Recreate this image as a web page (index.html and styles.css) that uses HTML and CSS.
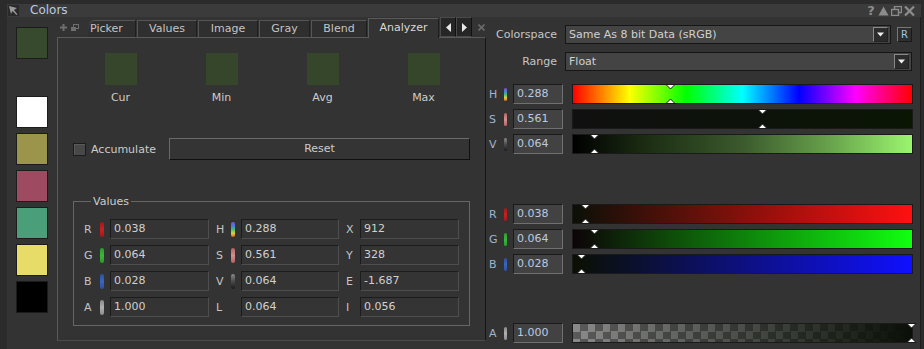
FILE: index.html
```html
<!DOCTYPE html>
<html>
<head>
<meta charset="utf-8">
<link rel="stylesheet" href="styles.css">
</head>
<body>
<div class="window">
  <div class="titlebar">
    <svg class="ticon" width="11" height="11" viewBox="0 0 11 11"><rect x="0" y="0" width="11" height="11" fill="#2a2a2a"/><path d="M1 1 L9 3 L6 5 L9.5 9.5 L8.5 10 L4.5 6 L3 9 Z" fill="#9a9a9a"/></svg>
    <span class="title">Colors</span>
    <div class="tbtns">
      <span class="tq">?</span>
      <svg width="11" height="10" viewBox="0 0 11 10"><path d="M5.5 0.5 L10.5 9.5 H0.5 Z" fill="#8c8c8c"/></svg>
      <svg width="11" height="10" viewBox="0 0 11 10"><rect x="3.5" y="0.5" width="7" height="6" fill="none" stroke="#8c8c8c" stroke-width="1.4"/><rect x="0.5" y="3.5" width="7" height="6" fill="#3c3c3c" stroke="#8c8c8c" stroke-width="1.4"/></svg>
      <svg width="11" height="10" viewBox="0 0 11 10"><path d="M1 0.5 L10 9.5 M10 0.5 L1 9.5" stroke="#8c8c8c" stroke-width="2.2"/></svg>
    </div>
  </div>
  <div class="main">
    <div class="swatches">
      <div class="sw sw-cur"></div>
      <div class="sw-list">
        <div class="sw sw-white"></div>
        <div class="sw sw-olive"></div>
        <div class="sw sw-rose"></div>
        <div class="sw sw-teal"></div>
        <div class="sw sw-yellow"></div>
        <div class="sw sw-black"></div>
      </div>
    </div>
    <div class="tabwidget">
      <div class="tabbar">
        <div class="tabtools">
          <svg width="7" height="7" viewBox="0 0 7 7"><path d="M3.5 0 V7 M0 3.5 H7" stroke="#6e6e6e" stroke-width="2"/></svg>
          <svg width="8" height="7" viewBox="0 0 8 7"><rect x="2.5" y="0.5" width="5" height="4" fill="none" stroke="#6e6e6e"/><rect x="0" y="3" width="5" height="4" fill="#6e6e6e"/></svg>
        </div>
        <div class="tab tab-picker">Picker</div>
        <div class="tab tab-values">Values</div>
        <div class="tab tab-image">Image</div>
        <div class="tab tab-gray">Gray</div>
        <div class="tab tab-blend">Blend</div>
        <div class="tab tab-analyzer active">Analyzer</div>
        <div class="scroll">
          <span class="sbtn"><svg width="5" height="9" viewBox="0 0 5 9"><path d="M5 0 V9 L0 4.5 Z" fill="#e8e8e8"/></svg></span>
          <span class="sbtn"><svg width="5" height="9" viewBox="0 0 5 9"><path d="M0 0 V9 L5 4.5 Z" fill="#e8e8e8"/></svg></span>
        </div>
        <svg class="tclose" width="7" height="7" viewBox="0 0 7 7"><path d="M0.5 0.5 L6.5 6.5 M6.5 0.5 L0.5 6.5" stroke="#6a6a6a" stroke-width="1.6"/></svg>
      </div>
      <div class="pane">
        <div class="stats">
          <div class="stat"><div class="stat-sw"></div><span>Cur</span></div>
          <div class="stat"><div class="stat-sw"></div><span>Min</span></div>
          <div class="stat"><div class="stat-sw"></div><span>Avg</span></div>
          <div class="stat"><div class="stat-sw"></div><span>Max</span></div>
        </div>
        <div class="accum">
          <span class="check"></span>
          <span class="check-label">Accumulate</span>
          <div class="btn">Reset</div>
        </div>
        <fieldset class="group">
          <legend>Values</legend>
          <div class="vgrid">
            <div class="vcell c1"><span class="vl">R</span><span class="vbar bar-r"></span><span class="vin">0.038</span></div>
            <div class="vcell c2"><span class="vl">H</span><span class="vbar bar-h"></span><span class="vin">0.288</span></div>
            <div class="vcell c3"><span class="vl">X</span><span class="vin">912</span></div>
            <div class="vcell c1"><span class="vl">G</span><span class="vbar bar-g"></span><span class="vin">0.064</span></div>
            <div class="vcell c2"><span class="vl">S</span><span class="vbar bar-s"></span><span class="vin">0.561</span></div>
            <div class="vcell c3"><span class="vl">Y</span><span class="vin">328</span></div>
            <div class="vcell c1"><span class="vl">B</span><span class="vbar bar-b"></span><span class="vin">0.028</span></div>
            <div class="vcell c2"><span class="vl">V</span><span class="vbar bar-v"></span><span class="vin">0.064</span></div>
            <div class="vcell c3"><span class="vl">E</span><span class="vin">-1.687</span></div>
            <div class="vcell c1"><span class="vl">A</span><span class="vbar bar-a"></span><span class="vin">1.000</span></div>
            <div class="vcell c2"><span class="vl">L</span><span class="vbar bar-none"></span><span class="vin">0.064</span></div>
            <div class="vcell c3"><span class="vl">I</span><span class="vin">0.056</span></div>
          </div>
        </fieldset>
      </div>
    </div>
    <div class="right">
      <div class="crow">
        <span class="clabel">Colorspace</span>
        <div class="combo combo-cs"><span>Same As 8 bit Data (sRGB)</span><span class="drop"><svg width="7" height="5" viewBox="0 0 7 5"><path d="M0 0.5 H7 L3.5 4.5 Z" fill="#eee"/></svg></span></div>
        <span class="rbtn">R</span>
      </div>
      <div class="crow crow-range">
        <span class="clabel">Range</span>
        <div class="combo combo-range"><span>Float</span><span class="drop"><svg width="7" height="5" viewBox="0 0 7 5"><path d="M0 0.5 H7 L3.5 4.5 Z" fill="#eee"/></svg></span></div>
      </div>

      <div class="srow first">
        <span class="sl">H</span><span class="sbar bar-h"></span><span class="sin">0.288</span>
        <div class="slider g-h"><svg class="mk" style="left:28.8%" width="11" height="20" viewBox="0 0 11 20"><path d="M1 0.5 H10 L5.5 5 Z" fill="#fff" stroke="#1a1a1a"/><path d="M1 19.5 H10 L5.5 15 Z" fill="#fff" stroke="#1a1a1a"/></svg></div>
      </div>
      <div class="srow">
        <span class="sl">S</span><span class="sbar bar-s"></span><span class="sin">0.561</span>
        <div class="slider g-s"><svg class="mk" style="left:56.1%" width="11" height="20" viewBox="0 0 11 20"><path d="M1 0.5 H10 L5.5 5 Z" fill="#fff" stroke="#1a1a1a"/><path d="M1 19.5 H10 L5.5 15 Z" fill="#fff" stroke="#1a1a1a"/></svg></div>
      </div>
      <div class="srow">
        <span class="sl">V</span><span class="sbar bar-v"></span><span class="sin">0.064</span>
        <div class="slider g-v"><svg class="mk" style="left:6.4%" width="11" height="20" viewBox="0 0 11 20"><path d="M1 0.5 H10 L5.5 5 Z" fill="#fff" stroke="#1a1a1a"/><path d="M1 19.5 H10 L5.5 15 Z" fill="#fff" stroke="#1a1a1a"/></svg></div>
      </div>

      <div class="srow gap-rgb">
        <span class="sl">R</span><span class="sbar bar-r"></span><span class="sin">0.038</span>
        <div class="slider g-r"><svg class="mk" style="left:3.8%" width="11" height="20" viewBox="0 0 11 20"><path d="M1 0.5 H10 L5.5 5 Z" fill="#fff" stroke="#1a1a1a"/><path d="M1 19.5 H10 L5.5 15 Z" fill="#fff" stroke="#1a1a1a"/></svg></div>
      </div>
      <div class="srow">
        <span class="sl">G</span><span class="sbar bar-g"></span><span class="sin">0.064</span>
        <div class="slider g-g"><svg class="mk" style="left:6.4%" width="11" height="20" viewBox="0 0 11 20"><path d="M1 0.5 H10 L5.5 5 Z" fill="#fff" stroke="#1a1a1a"/><path d="M1 19.5 H10 L5.5 15 Z" fill="#fff" stroke="#1a1a1a"/></svg></div>
      </div>
      <div class="srow">
        <span class="sl">B</span><span class="sbar bar-b"></span><span class="sin">0.028</span>
        <div class="slider g-b"><svg class="mk" style="left:2.8%" width="11" height="20" viewBox="0 0 11 20"><path d="M1 0.5 H10 L5.5 5 Z" fill="#fff" stroke="#1a1a1a"/><path d="M1 19.5 H10 L5.5 15 Z" fill="#fff" stroke="#1a1a1a"/></svg></div>
      </div>

      <div class="srow gap-a">
        <span class="sl">A</span><span class="sbar bar-a"></span><span class="sin">1.000</span>
        <div class="slider g-a"><svg class="mk" style="left:100%" width="11" height="20" viewBox="0 0 11 20"><path d="M1 0.5 H10 L5.5 5 Z" fill="#fff" stroke="#1a1a1a"/><path d="M1 19.5 H10 L5.5 15 Z" fill="#fff" stroke="#1a1a1a"/></svg></div>
      </div>
    </div>
  </div>
</div>
</body>
</html>
```

FILE: styles.css
```css
* { box-sizing: border-box; }
html, body { margin: 0; padding: 0; }
body {
  width: 924px;
  height: 349px;
  overflow: hidden;
  background: #2b2b2b;
  font-family: "DejaVu Sans", sans-serif;
  font-size: 11px;
  color: #c6c6c6;
}
.window {
  margin: 4px 3px 0 7px;
  height: 345px;
  background: #333333;
}
.titlebar {
  height: 13px;
  background: #3b3b3b;
  display: flex;
  align-items: center;
  padding-left: 1px;
}
.ticon { display: block; }
.title {
  margin-left: 11px;
  font-size: 12px;
  color: #bccbe0;
  line-height: 13px;
}
.tbtns {
  margin-left: auto;
  margin-right: 6px;
  display: flex;
  align-items: center;
  gap: 2px;
  height: 13px;
}
.tbtns svg { display: block; }
.tq {
  font-weight: bold;
  font-size: 13px;
  line-height: 13px;
  color: #8c8c8c;
  width: 10px;
  text-align: center;
}
.main {
  display: flex;
  height: 332px;
}

/* left swatches */
.swatches {
  width: 50px;
  padding: 10px 0 0 9px;
}
.sw {
  width: 32px;
  height: 32px;
  border: 1px solid #1c1c1c;
}
.sw-cur { background: #374a2e; }
.sw-list {
  margin-top: 37px;
  display: flex;
  flex-direction: column;
  gap: 5px;
}
.sw-white { background: #ffffff; }
.sw-olive { background: #9a954b; }
.sw-rose { background: #9e4b62; }
.sw-teal { background: #4a9e7a; }
.sw-yellow { background: #e8dc68; }
.sw-black { background: #000000; }

/* tabs */
.tabwidget {
  width: 429px;
  display: flex;
  flex-direction: column;
}
.tabbar {
  height: 20px;
  display: flex;
  align-items: flex-end;
  position: relative;
  z-index: 1;
}
.tabtools {
  width: 31px;
  height: 20px;
  display: flex;
  align-items: center;
  padding-left: 3px;
  gap: 4px;
}
.tabtools svg { display: block; }
.tab {
  height: 17px;
  margin-right: 1px;
  background: #2f2f2f;
  border: 1px solid #555555;
  border-right-color: #1e1e1e;
  border-bottom: none;
  text-align: center;
  line-height: 16px;
  color: #c4c4c4;
}
.tab-picker { width: 48px; border-left: none; border-top-left-radius: 6px 12px; text-align: left; padding-left: 2px; }
.tab-values { width: 60px; }
.tab-image { width: 60px; }
.tab-gray { width: 51px; }
.tab-blend { width: 56px; margin-right: 1px; }
.tab-analyzer { width: 71px; }
.tab.active {
  height: 20px;
  margin-bottom: -1px;
  background: #333333;
  color: #d8d8d8;
  line-height: 18px;
  border-color: #5a5a5a;
  border-right-color: #1e1e1e;
}
.scroll {
  display: flex;
  height: 20px;
  align-self: flex-start;
}
.sbtn {
  width: 16px;
  height: 20px;
  background: #262626;
  border: 1px solid #4a4a4a;
  border-right-color: #111;
  display: flex;
  align-items: center;
  justify-content: center;
}
.sbtn svg { display: block; }
.tclose {
  align-self: center;
  margin-left: 6px;
  display: block;
}
.pane {
  height: 304px;
  border-top: 1px solid #5a5a5a;
  border-left: 1px solid #5a5a5a;
  border-right: 1px solid #151515;
  border-bottom: 1px solid #4a4a4a;
  padding: 0 15px;
}
.stats {
  display: grid;
  grid-template-columns: repeat(4, 101px);
  margin-left: -3px;
  padding-top: 15px;
}
.stat {
  display: flex;
  flex-direction: column;
  align-items: center;
}
.stat-sw {
  width: 32px;
  height: 32px;
  background: #36462b;
}
.stat span {
  margin-top: 6px;
  line-height: 13px;
  color: #cccccc;
}
.accum {
  margin-top: 34px;
  height: 22px;
  display: flex;
  align-items: center;
}
.check {
  width: 13px;
  height: 13px;
  background: #484848;
  border: 1px solid #1c1c1c;
  box-shadow: inset 1px 1px 0 #5a5a5a;
}
.check-label {
  margin-left: 5px;
  color: #cccccc;
}
.btn {
  margin-left: auto;
  width: 301px;
  height: 22px;
  background: #343434;
  border: 1px solid #6a6a6a;
  border-right-color: #101010;
  border-bottom-color: #101010;
  text-align: center;
  line-height: 20px;
  color: #cccccc;
}
.group {
  margin: 35px 0 0 0;
  width: 397px;
  border: 1px solid #666666;
  padding: 11px 9px 8px 10px;
  min-width: 0;
}
.group legend {
  padding: 0 2px;
  margin-left: 7px;
  line-height: 13px;
  color: #cccccc;
}
.vgrid {
  display: grid;
  grid-template-columns: 125px 123px 113px;
  grid-auto-rows: 20px;
  column-gap: 7px;
  row-gap: 6px;
}
.vcell {
  display: flex;
  align-items: center;
}
.vl { color: #c4c4c4; }
.c1 .vl { width: 16px; }
.c2 .vl { width: 15px; }
.c3 .vl { width: 14px; }
.vbar {
  width: 4px;
  height: 15px;
  border-radius: 2px;
  margin-right: 6px;
}
.bar-none { background: transparent; }
.vin {
  flex: 1;
  height: 20px;
  background: #343434;
  border: 1px solid #1c1c1c;
  border-right-color: #4e4e4e;
  border-bottom-color: #4e4e4e;
  padding-left: 3px;
  line-height: 18px;
  color: #d0d0d0;
}
.bar-r { background: linear-gradient(#a41818, #c42222, #a41818); }
.bar-g { background: linear-gradient(#2a9a2a, #3ab83a, #2a9a2a); }
.bar-b { background: linear-gradient(#2a50a0, #3a66c0, #2a50a0); }
.bar-a { background: linear-gradient(#8a8a8a, #b0b0b0, #8a8a8a); }
.bar-h { background: linear-gradient(#8a50c8, #4a7ae0, #40c070, #e0d040, #e06020); }
.bar-s { background: linear-gradient(#b86060, #d09090, #b86060); }
.bar-v { background: linear-gradient(#8a8a8a, #4a4a4a, #1a1a1a); }

/* right panel */
.right {
  width: 435px;
  padding-top: 8px;
  border-right: 1px solid #1e1e1e;
}
.crow {
  height: 19px;
  display: flex;
  align-items: center;
}
.crow-range { margin-top: 8px; }
.clabel {
  width: 71px;
  text-align: right;
  margin-right: 8px;
  color: #c6c6c6;
}
.combo {
  height: 19px;
  background: #444444;
  border: 1px solid #161616;
  display: flex;
  align-items: center;
  padding-left: 3px;
  color: #d0d0d0;
}
.combo-cs { width: 326px; }
.combo-range { width: 347px; }
.drop {
  margin-left: auto;
  margin-right: 2px;
  width: 15px;
  height: 15px;
  background: #2c2c2c;
  border: 1px solid #888888;
  border-right-color: #222;
  border-bottom-color: #222;
  display: flex;
  align-items: center;
  justify-content: center;
}
.drop svg { display: block; }
.rbtn {
  margin-left: 6px;
  width: 15px;
  height: 15px;
  border: 1px solid #777777;
  border-right-color: #1a1a1a;
  border-bottom-color: #1a1a1a;
  background: #2e2e2e;
  text-align: center;
  line-height: 13px;
  font-size: 10px;
  color: #9fc4e8;
}
.srow {
  height: 20px;
  margin-top: 5px;
  display: flex;
  align-items: center;
  padding-left: 3px;
}
.srow.first { margin-top: 13px; }
.srow.gap-rgb { margin-top: 50px; }
.srow.gap-a { margin-top: 49px; }
.sl {
  width: 15px;
  color: #9fb4d0;
}
.sbar {
  width: 3px;
  height: 13px;
  border-radius: 2px;
  margin-right: 6px;
}
.sin {
  width: 50px;
  height: 20px;
  background: #424242;
  border: 1px solid #1a1a1a;
  border-right-color: #707070;
  border-bottom-color: #707070;
  padding-left: 3px;
  line-height: 18px;
  color: #bccae0;
}
.slider {
  margin-left: 9px;
  width: 341px;
  height: 20px;
  border: 1px solid #1a1a1a;
  position: relative;
}
.mk {
  position: absolute;
  top: -1px;
  margin-left: -6px;
  display: block;
}
.g-h { background: linear-gradient(to right, #ff0000, #ffff00 16.67%, #00ff00 33.33%, #00ffff 50%, #0000ff 66.67%, #ff00ff 83.33%, #ff0000); }
.g-s { background: linear-gradient(to right, #101010, #0a1504); }
.g-v { background: linear-gradient(to right, #000000, #1a2a12 20%, #3b5a2d 50%, #66a04a 75%, #9bf56f); }
.g-r { background: linear-gradient(to right, #0b1007, #ff1010); }
.g-g { background: linear-gradient(to right, #0d0307, #10ff10); }
.g-b { background: linear-gradient(to right, #0a1000, #1010ff); }
.g-a {
  background:
    linear-gradient(to right, rgba(10,16,7,0), rgba(10,16,7,1)),
    conic-gradient(#5a5a5a 0 25%, #8a8a8a 0 50%, #5a5a5a 0 75%, #8a8a8a 0) 0 0 / 15px 15px;
}
```
